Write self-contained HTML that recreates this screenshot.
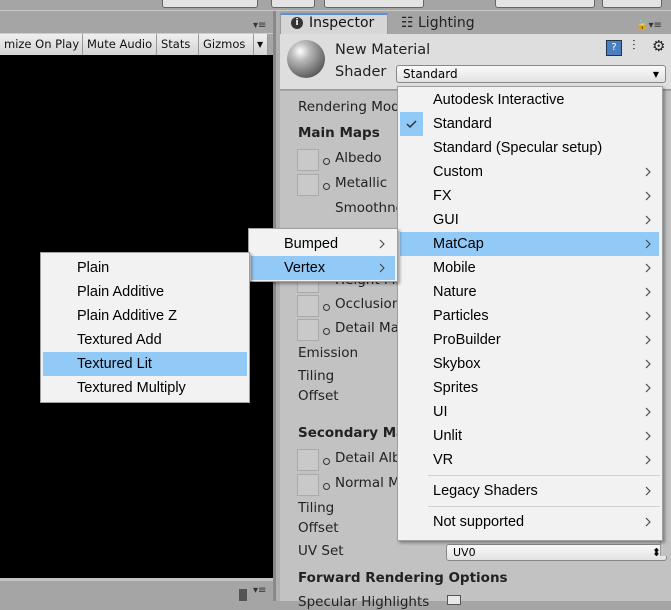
<!DOCTYPE html>
<html><head><meta charset="utf-8"><style>
*{margin:0;padding:0;box-sizing:border-box}
body{width:671px;height:601px;overflow:hidden;position:relative;background:#a5a5a5;font-family:"DejaVu Sans","Liberation Sans",sans-serif;font-size:13px;color:#000}
.a{position:absolute}
.btn{position:absolute;top:-4px;height:12px;border:1px solid #666;border-radius:3px;background:#e4e4e4}
.menu{position:absolute;background:#f2f2f2;border:1px solid #a0a0a0;box-shadow:2px 2px 3px rgba(0,0,0,.35);font-family:"Liberation Sans",sans-serif;font-size:14.5px;color:#000}
.it{position:absolute;left:0;right:0;height:24px;line-height:24px;white-space:nowrap}
.hl{background:#91c9f7}
.ar{position:absolute;width:6px;height:10px}
.lbl{position:absolute;font-size:13.5px;color:#222;white-space:nowrap}
.b{font-weight:bold}
.sq{position:absolute;width:22px;height:22px;border:1px solid #aaa;background:#c9c9c9;left:297px}
.dot{position:absolute;width:7px;height:7px;border:1.5px solid #333;border-radius:50%}
.tbb{position:absolute;top:34px;height:21px;background:linear-gradient(#f0f0f0,#d4d4d4);border-right:1px solid #999;font-size:11.5px;line-height:21px;padding-left:4px;color:#111;white-space:nowrap;overflow:hidden}
</style></head><body>
<svg width="0" height="0" style="position:absolute"><defs><symbol id="chev" viewBox="0 0 6 10"><polyline points="1,1 5,5 1,9" fill="none" stroke="#444" stroke-width="1.1"/></symbol></defs></svg>
<div class="btn" style="left:162px;width:96px"></div>
<div class="btn" style="left:271px;width:44px"></div>
<div class="btn" style="left:324px;width:100px"></div>
<div class="btn" style="left:495px;width:100px"></div>
<div class="btn" style="left:602px;width:60px"></div>
<div class="a" style="left:0;top:10px;width:671px;height:1px;background:#c8c8c8"></div>
<div class="a" style="left:253px;top:20px;font-size:10px;color:#333">▾≡</div>
<div class="a" style="left:0;top:33px;width:273px;height:1px;background:#ccc"></div>
<div class="tbb" style="left:0;width:83px">mize On Play</div>
<div class="tbb" style="left:83px;width:74px">Mute Audio</div>
<div class="tbb" style="left:157px;width:42px">Stats</div>
<div class="tbb" style="left:199px;width:55px">Gizmos</div>
<div class="tbb" style="left:254px;width:14px;font-size:8px;padding-left:3px">▼</div>
<div class="a" style="left:0;top:55px;width:273px;height:523px;background:#000"></div>
<div class="a" style="left:0;top:578px;width:276px;height:3px;background:#c4c4c4"></div>
<div class="a" style="left:239px;top:589px;width:8px;height:12px;background:#555"></div>
<div class="a" style="left:253px;top:585px;font-size:10px;color:#333">▾≡</div>
<div class="a" style="left:273px;top:11px;width:3px;height:590px;background:#888"></div>
<div class="a" style="left:276px;top:11px;width:4px;height:590px;background:#b0b0b0"></div>
<div class="a" style="left:280px;top:13px;width:108px;height:21px;background:#d6d6d6;border:1px solid #999;border-bottom:none;border-top:2px solid #5b8fd8"></div>
<div class="a" style="left:291px;top:17px;width:12px;height:12px;border-radius:50%;background:#333;color:#fff;font-size:9px;text-align:center;line-height:12px;font-weight:bold">i</div>
<div class="a" style="left:309px;top:15px;font-size:14px;color:#111">Inspector</div>
<div class="a" style="left:401px;top:15px;font-size:14px;color:#222">☷ Lighting</div>
<div class="a" style="left:636px;top:20px;font-size:10px;color:#333">🔓▾≡</div>
<div class="a" style="left:280px;top:34px;width:391px;height:56px;background:#dedede;border-bottom:1px solid #999"></div>
<div class="a" style="left:287px;top:40px;width:38px;height:38px;border-radius:50%;background:radial-gradient(circle at 35% 30%,#fff 0,#bbb 25%,#666 70%,#333 100%)"></div>
<div class="a" style="left:335px;top:42px;font-size:14.5px;color:#222">New Material</div>
<div class="a" style="left:335px;top:64px;font-size:14.5px;color:#222">Shader</div>
<div class="a" style="left:396px;top:65px;width:270px;height:18px;border:1px solid #888;border-radius:3px;background:linear-gradient(#fafafa,#e2e2e2);font-size:12px;line-height:17px;padding-left:6px">Standard<span style="position:absolute;right:6px;font-size:8px">▼</span></div>
<div class="a" style="left:606px;top:40px;width:16px;height:16px;background:#4c7fc0;border:1px solid #234;color:#fff;font-size:10px;text-align:center;line-height:14px">?</div>
<div class="a" style="left:632px;top:38px;font-size:14px;color:#222">⫶</div>
<div class="a" style="left:652px;top:37px;font-size:15px;color:#222">⚙</div>
<div class="a" style="left:280px;top:91px;width:391px;height:510px;background:#c2c2c2"></div>
<div class="lbl" style="left:298px;top:99px">Rendering Mode</div>
<div class="lbl b" style="left:298px;top:125px">Main Maps</div>
<div class="sq" style="top:149px"></div><div class="dot" style="left:323px;top:158px"></div><div class="lbl" style="left:335px;top:150px">Albedo</div>
<div class="sq" style="top:174px"></div><div class="dot" style="left:323px;top:183px"></div><div class="lbl" style="left:335px;top:175px">Metallic</div>
<div class="lbl" style="left:335px;top:200px">Smoothness</div>
<div class="sq" style="top:271px"></div><div class="lbl" style="left:335px;top:272px">Height Map</div>
<div class="sq" style="top:295px"></div><div class="dot" style="left:323px;top:304px"></div><div class="lbl" style="left:335px;top:296px">Occlusion</div>
<div class="sq" style="top:319px"></div><div class="dot" style="left:323px;top:328px"></div><div class="lbl" style="left:335px;top:320px">Detail Mask</div>
<div class="lbl" style="left:298px;top:345px">Emission</div>
<div class="lbl" style="left:298px;top:368px">Tiling</div>
<div class="lbl" style="left:298px;top:388px">Offset</div>
<div class="lbl b" style="left:298px;top:425px">Secondary Maps</div>
<div class="sq" style="top:449px"></div><div class="dot" style="left:323px;top:458px"></div><div class="lbl" style="left:335px;top:450px">Detail Albedo</div>
<div class="sq" style="top:474px"></div><div class="dot" style="left:323px;top:483px"></div><div class="lbl" style="left:335px;top:475px">Normal Map</div>
<div class="lbl" style="left:298px;top:500px">Tiling</div>
<div class="lbl" style="left:298px;top:520px">Offset</div>
<div class="lbl" style="left:298px;top:543px">UV Set</div>
<div class="a" style="left:446px;top:544px;width:221px;height:17px;border:1px solid #888;border-radius:3px;background:linear-gradient(#fafafa,#e2e2e2);font-size:11px;line-height:16px;padding-left:6px">UV0<span style="position:absolute;right:5px">⬍</span></div>
<div class="lbl b" style="left:298px;top:570px">Forward Rendering Options</div>
<div class="lbl" style="left:298px;top:594px">Specular Highlights</div>
<div class="a" style="left:447px;top:595px;width:14px;height:10px;border:1px solid #555;background:#e8e8e8"></div>
<div class="a" style="left:660px;top:96px;width:11px;height:460px;background:#c2c2c2;border-left:1px solid #999"></div>

<div class="menu" style="left:397px;top:86px;width:266px;height:455px">
<div class="it" style="top:1px;padding-left:35px">Autodesk Interactive</div>
<div class="it" style="top:25px;padding-left:35px">Standard</div>
<div class="a hl" style="left:2px;top:25px;width:23px;height:24px"><svg width="23" height="24"><polyline points="7,12 10,15 16,9" fill="none" stroke="#333" stroke-width="1.5"/></svg></div>
<div class="it" style="top:49px;padding-left:35px">Standard (Specular setup)</div>
<div class="it" style="top:73px;padding-left:35px">Custom</div>
<div class="it" style="top:97px;padding-left:35px">FX</div>
<div class="it" style="top:121px;padding-left:35px">GUI</div>
<div class="it hl" style="top:145px;left:2px;right:3px;padding-left:33px">MatCap</div>
<div class="it" style="top:169px;padding-left:35px">Mobile</div>
<div class="it" style="top:193px;padding-left:35px">Nature</div>
<div class="it" style="top:217px;padding-left:35px">Particles</div>
<div class="it" style="top:241px;padding-left:35px">ProBuilder</div>
<div class="it" style="top:265px;padding-left:35px">Skybox</div>
<div class="it" style="top:289px;padding-left:35px">Sprites</div>
<div class="it" style="top:313px;padding-left:35px">UI</div>
<div class="it" style="top:337px;padding-left:35px">Unlit</div>
<div class="it" style="top:361px;padding-left:35px">VR</div>
<div class="a" style="left:30px;right:2px;top:388px;height:1px;background:#d0d0d0"></div>
<div class="it" style="top:392px;padding-left:35px">Legacy Shaders</div>
<div class="a" style="left:30px;right:2px;top:419px;height:1px;background:#d0d0d0"></div>
<div class="it" style="top:423px;padding-left:35px">Not supported</div>
<svg class="ar" style="left:247px;top:80px"><use href="#chev"/></svg>
<svg class="ar" style="left:247px;top:104px"><use href="#chev"/></svg>
<svg class="ar" style="left:247px;top:128px"><use href="#chev"/></svg>
<svg class="ar" style="left:247px;top:152px"><use href="#chev"/></svg>
<svg class="ar" style="left:247px;top:176px"><use href="#chev"/></svg>
<svg class="ar" style="left:247px;top:200px"><use href="#chev"/></svg>
<svg class="ar" style="left:247px;top:224px"><use href="#chev"/></svg>
<svg class="ar" style="left:247px;top:248px"><use href="#chev"/></svg>
<svg class="ar" style="left:247px;top:272px"><use href="#chev"/></svg>
<svg class="ar" style="left:247px;top:296px"><use href="#chev"/></svg>
<svg class="ar" style="left:247px;top:320px"><use href="#chev"/></svg>
<svg class="ar" style="left:247px;top:344px"><use href="#chev"/></svg>
<svg class="ar" style="left:247px;top:368px"><use href="#chev"/></svg>
<svg class="ar" style="left:247px;top:399px"><use href="#chev"/></svg>
<svg class="ar" style="left:247px;top:430px"><use href="#chev"/></svg>
</div>

<div class="menu" style="left:248px;top:228px;width:150px;height:54px">
<div class="it" style="top:3px;padding-left:35px">Bumped</div>
<div class="it hl" style="top:27px;left:2px;right:2px;padding-left:33px">Vertex</div>
<svg class="ar" style="left:130px;top:10px"><use href="#chev"/></svg>
<svg class="ar" style="left:130px;top:34px"><use href="#chev"/></svg>
</div>

<div class="menu" style="left:40px;top:252px;width:210px;height:151px">
<div class="it" style="top:3px;padding-left:36px">Plain</div>
<div class="it" style="top:27px;padding-left:36px">Plain Additive</div>
<div class="it" style="top:51px;padding-left:36px">Plain Additive Z</div>
<div class="it" style="top:75px;padding-left:36px">Textured Add</div>
<div class="it hl" style="top:99px;left:2px;right:2px;padding-left:34px">Textured Lit</div>
<div class="it" style="top:123px;padding-left:36px">Textured Multiply</div>
</div>
</body></html>
